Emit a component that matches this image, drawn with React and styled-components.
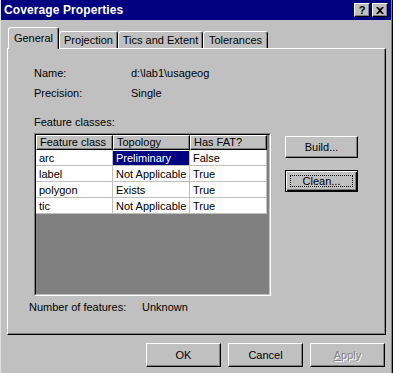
import React from "react";
import styled, { createGlobalStyle } from "styled-components";

const GlobalStyle = createGlobalStyle`
  html, body {
    margin: 0;
    padding: 0;
    background: #c0c0c0;
  }
  body {
    font-family: "Liberation Sans", Arial, sans-serif;
    font-size: 11px;
    color: #000;
  }
`;

const Window = styled.div`
  width: 393px;
  height: 373px;
  box-sizing: border-box;
  background: #c0c0c0;
  display: flex;
  flex-direction: column;
  overflow: hidden;
  box-shadow: inset 1px 0 #dfdfdf, inset -1px 0 #000, inset -2px 0 #808080;
`;

const TitleBar = styled.div`
  height: 20px;
  margin: 0 2px 0 1px;
  background: #000080;
  display: flex;
  align-items: center;
  padding: 0 3px 0 3px;
`;

const TitleText = styled.div`
  flex: 1;
  color: #fff;
  font-weight: bold;
  font-size: 12px;
  letter-spacing: 0.1px;
`;

const CaptionButton = styled.div`
  width: 16px;
  height: 14px;
  box-sizing: border-box;
  background: #c0c0c0;
  border: 1px solid;
  border-color: #fff #000 #000 #fff;
  box-shadow: inset -1px -1px #808080;
  display: flex;
  align-items: center;
  justify-content: center;
  margin-left: ${(p) => (p.$gap ? "2px" : "0")};
  font-weight: bold;
  font-size: 11px;
  line-height: 1;
`;

const Body = styled.div`
  padding: 7px 7px 0 7px;
  display: flex;
  flex-direction: column;
`;

const TabStrip = styled.div`
  display: flex;
  align-items: flex-end;
  height: 21px;
  padding-left: 1px;
  position: relative;
  z-index: 1;
`;

const Tab = styled.div`
  width: ${(p) => p.$w}px;
  height: ${(p) => (p.$active ? 22 : 17)}px;
  margin-bottom: ${(p) => (p.$active ? -1 : 0)}px;
  box-sizing: border-box;
  background: #c0c0c0;
  border-left: 1px solid #fff;
  border-top: 1px solid #fff;
  border-right: 1px solid #000;
  border-radius: 3px 3px 0 0;
  box-shadow: inset -1px 0 #808080;
  display: flex;
  align-items: ${(p) => (p.$active ? "flex-start" : "center")};
  justify-content: center;
  padding-top: ${(p) => (p.$active ? 4 : 0)}px;
  font-size: 11px;
  white-space: nowrap;
`;

const Panel = styled.div`
  height: 287px;
  box-sizing: border-box;
  border: 1px solid;
  border-color: #fff #000 #000 #fff;
  box-shadow: inset -1px -1px #808080;
  padding: 18px 0 0 26px;
  display: flex;
  flex-direction: column;
`;

const InfoRow = styled.div`
  display: flex;
  line-height: 13px;
  height: 13px;
  margin-bottom: 7px;
`;

const InfoLabel = styled.div`
  width: 97px;
`;

const SectionLabel = styled.div`
  line-height: 13px;
  margin-top: 9px;
  margin-bottom: 4px;
`;

const GridArea = styled.div`
  display: flex;
  align-items: flex-start;
`;

const ListBox = styled.div`
  width: 237px;
  height: 163px;
  box-sizing: border-box;
  border: 1px solid;
  border-color: #808080 #fff #fff #808080;
  background: #808080;
`;

const ListInner = styled.div`
  height: 100%;
  box-sizing: border-box;
  border: 1px solid;
  border-color: #000 #c0c0c0 #c0c0c0 #000;
`;

const Table = styled.div`
  display: grid;
  grid-template-columns: 77px 77px 77px;
  width: 231px;
`;

const HeaderCell = styled.div`
  height: 15px;
  box-sizing: border-box;
  background: #c0c0c0;
  border: 1px solid;
  border-color: #fff #000 #000 #fff;
  box-shadow: inset -1px -1px #808080;
  padding-left: 3px;
  line-height: 13px;
  font-size: 11px;
  white-space: nowrap;
  overflow: hidden;
`;

const Cell = styled.div`
  height: 16px;
  box-sizing: border-box;
  background: #fff;
  border-right: 1px solid #c0c0c0;
  border-bottom: 1px solid #c0c0c0;
  padding: 1px 0 1px 0;
  font-size: 11px;
  white-space: nowrap;
  overflow: hidden;
`;

const CellText = styled.div`
  height: 14px;
  line-height: 14px;
  padding-left: 3px;
  background: ${(p) => (p.$selected ? "#000080" : "transparent")};
  color: ${(p) => (p.$selected ? "#fff" : "#000")};
`;

const SideButtons = styled.div`
  display: flex;
  flex-direction: column;
  gap: 12px;
  margin-left: 14px;
  padding-top: 3px;
`;

const Button = styled.div`
  width: ${(p) => p.$w || 73}px;
  height: ${(p) => p.$h || 22}px;
  box-sizing: border-box;
  background: #c0c0c0;
  border: 1px solid;
  border-color: ${(p) => (p.$default ? "#000" : "#fff #000 #000 #fff")};
  box-shadow: ${(p) =>
    p.$default
      ? "inset 1px 1px #fff, inset -1px -1px #000, inset -2px -2px #808080"
      : "inset -1px -1px #808080"};
  display: flex;
  align-items: center;
  justify-content: center;
  font-size: 11px;
  color: ${(p) => (p.$disabled ? "#808080" : "#000")};
  text-shadow: ${(p) => (p.$disabled ? "1px 1px #fff" : "none")};
`;

const FocusRing = styled.div`
  width: calc(100% - 8px);
  height: calc(100% - 8px);
  box-sizing: border-box;
  border: 1px dotted #000;
  display: flex;
  align-items: center;
  justify-content: center;
`;

const CountRow = styled.div`
  display: flex;
  line-height: 13px;
  margin-top: 5px;
  margin-left: -5px;
`;

const CountLabel = styled.div`
  width: 113px;
`;

const Footer = styled.div`
  display: flex;
  justify-content: flex-end;
  gap: 7px;
  padding: 8px 1px 0 0;
`;

const Underline = styled.span`
  text-decoration: underline;
`;

const rows = [
  ["arc", "Preliminary", "False"],
  ["label", "Not Applicable", "True"],
  ["polygon", "Exists", "True"],
  ["tic", "Not Applicable", "True"],
];

const App = () => {
  return (
    <>
      <GlobalStyle />
      <Window>
        <TitleBar>
          <TitleText>Coverage Properties</TitleText>
          <CaptionButton>?</CaptionButton>
          <CaptionButton $gap>
            <svg width="8" height="7" viewBox="0 0 8 7">
              <path d="M0 0h2l2 2 2-2h2L5 3.5 8 7H6L4 5 2 7H0l3-3.5z" fill="#000" />
            </svg>
          </CaptionButton>
        </TitleBar>
        <Body>
          <TabStrip>
            <Tab $w={51} $active>General</Tab>
            <Tab $w={59}>Projection</Tab>
            <Tab $w={85}>Tics and Extent</Tab>
            <Tab $w={65}>Tolerances</Tab>
          </TabStrip>
          <Panel>
            <InfoRow>
              <InfoLabel>Name:</InfoLabel>
              <div>d:\lab1\usageog</div>
            </InfoRow>
            <InfoRow>
              <InfoLabel>Precision:</InfoLabel>
              <div>Single</div>
            </InfoRow>
            <SectionLabel>Feature classes:</SectionLabel>
            <GridArea>
              <ListBox>
                <ListInner>
                  <Table>
                    <HeaderCell>Feature class</HeaderCell>
                    <HeaderCell>Topology</HeaderCell>
                    <HeaderCell>Has FAT?</HeaderCell>
                    {rows.map((r, i) =>
                      r.map((v, j) => (
                        <Cell key={`${i}-${j}`}>
                          <CellText $selected={i === 0 && j === 1}>{v}</CellText>
                        </Cell>
                      ))
                    )}
                  </Table>
                </ListInner>
              </ListBox>
              <SideButtons>
                <Button>Build...</Button>
                <Button $default>
                  <FocusRing>Clean...</FocusRing>
                </Button>
              </SideButtons>
            </GridArea>
            <CountRow>
              <CountLabel>Number of features:</CountLabel>
              <div>Unknown</div>
            </CountRow>
          </Panel>
          <Footer>
            <Button $w={75} $h={24}>OK</Button>
            <Button $w={75} $h={24}>Cancel</Button>
            <Button $w={75} $h={24} $disabled>
              <Underline>A</Underline>pply
            </Button>
          </Footer>
        </Body>
      </Window>
    </>
  );
};

export default App;
